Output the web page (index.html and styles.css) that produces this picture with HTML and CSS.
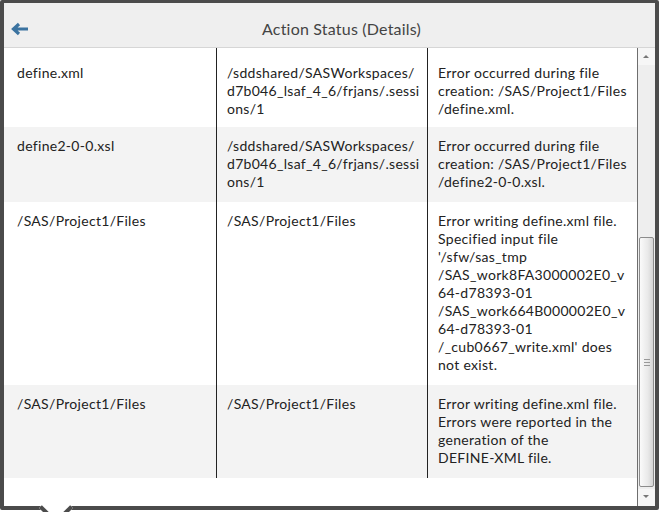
FILE: index.html
```html
<!DOCTYPE html>
<html>
<head>
<meta charset="utf-8">
<link rel="stylesheet" href="styles.css">
</head>
<body>
<div class="dialog">
  <div class="header">
    <svg class="back" width="20" height="14" viewBox="0 0 20 14">
      <path d="M18 7 H4 M9 2 L3.5 7 L9 12" fill="none" stroke="#3b73a0" stroke-width="3.2" stroke-linecap="butt" stroke-linejoin="miter"/>
    </svg>
    <div class="title">Action Status (Details)</div>
  </div>
  <div class="content">
    <div class="table-area">
      <div class="table">
        <div class="row first">
          <div class="cell c1">define.xml</div>
          <div class="cell c2">/sddshared/SASWorkspaces/<br>d7b046_lsaf_4_6/frjans/.sessi<br>ons/1</div>
          <div class="cell c3">Error occurred during file<br>creation: /SAS/Project1/Files<br>/define.xml.</div>
        </div>
        <div class="row alt">
          <div class="cell c1">define2-0-0.xsl</div>
          <div class="cell c2">/sddshared/SASWorkspaces/<br>d7b046_lsaf_4_6/frjans/.sessi<br>ons/1</div>
          <div class="cell c3">Error occurred during file<br>creation: /SAS/Project1/Files<br>/define2-0-0.xsl.</div>
        </div>
        <div class="row">
          <div class="cell c1">/SAS/Project1/Files</div>
          <div class="cell c2">/SAS/Project1/Files</div>
          <div class="cell c3">Error writing define.xml file.<br>Specified input file<br>'/sfw/sas_tmp<br>/SAS_work8FA3000002E0_v<br>64-d78393-01<br>/SAS_work664B000002E0_v<br>64-d78393-01<br>/_cub0667_write.xml' does<br>not exist.</div>
        </div>
        <div class="row alt">
          <div class="cell c1">/SAS/Project1/Files</div>
          <div class="cell c2">/SAS/Project1/Files</div>
          <div class="cell c3">Error writing define.xml file.<br>Errors were reported in the<br>generation of the<br>DEFINE-XML file.</div>
        </div>
      </div>
    </div>
    <div class="scrollbar">
      <div class="arrow up"></div>
      <div class="track">
        <div class="thumb"><div class="grip"></div></div>
      </div>
      <div class="arrow down"></div>
    </div>
  </div>
</div>
</body>
</html>
```

FILE: styles.css
```css
* { box-sizing: border-box; }
html, body { margin: 0; padding: 0; background: #ffffff; }
body { width: 659px; height: 512px; overflow: hidden; font-family: Lato, "Open Sans", sans-serif; color: #222; }

.dialog {
  position: relative;
  width: 659px;
  height: 510px;
  border-style: solid;
  border-color: #4b4b4b;
  border-width: 3px 4px 4px 4px;
  border-radius: 2px;
  display: flex;
  flex-direction: column;
  background: #fff;
}
.dialog::after {
  content: "";
  position: absolute;
  left: 40px;
  bottom: -14px;
  width: 20px;
  height: 20px;
  background: #fff;
  border-right: 4px solid #4b4b4b;
  border-bottom: 4px solid #4b4b4b;
  transform: rotate(45deg);
}

.header {
  height: 45px;
  flex: none;
  background: #efefef;
  border-bottom: 1px solid #d6d6d6;
  display: flex;
  align-items: center;
  padding: 7px 0 0 6px;
}
.back { flex: none; display: block; }
.title {
  flex: 1;
  text-align: center;
  font-size: 16px;
  letter-spacing: 0.2px;
  color: #444;
  padding-right: 2px;
}

.content {
  flex: 1;
  display: flex;
  min-height: 0;
}
.table-area {
  flex: 1;
  background: #fff;
}
.table { display: flex; flex-direction: column; }
.row {
  display: grid;
  grid-template-columns: 213px 211px 1fr;
  background: #fff;
}
.row.alt { background: #f3f3f3; }
.cell {
  font-size: 14px;
  letter-spacing: 0.3px;
  line-height: 18px;
  white-space: nowrap;
  padding: 10px 0 11px 10px;
  color: #222;
}
.row.first .cell { padding-top: 16px; padding-bottom: 9px; }
.c1 { padding-left: 13px; border-right: 1px solid #222; }
.c2 { border-right: 1px solid #222; }

.scrollbar {
  width: 18px;
  flex: none;
  border-left: 1px solid #6e6e6e;
  background: #f6f6f6;
  display: flex;
  flex-direction: column;
}
.arrow {
  height: 17px;
  flex: none;
  position: relative;
}
.arrow::before {
  content: "";
  position: absolute;
  left: 5px;
  width: 0;
  height: 0;
  border-left: 3px solid transparent;
  border-right: 3px solid transparent;
}
.arrow.up::before { top: 7px; border-bottom: 3px solid #777; }
.arrow.down::before { top: 6px; border-top: 3px solid #777; }
.track {
  flex: 1;
  display: flex;
  flex-direction: column;
  justify-content: flex-end;
  background: #eeeeee;
  padding: 0 1px;
}
.thumb {
  height: 250px;
  border: 1px solid #8c8c8c;
  border-radius: 2px;
  background: linear-gradient(to right, #fafafa, #e9e9e9 60%, #d4d4d4);
  display: flex;
  align-items: center;
  justify-content: center;
  margin-bottom: 2px;
}
.grip {
  width: 6px;
  height: 7px;
  border-top: 1px solid #999;
  border-bottom: 1px solid #999;
  position: relative;
}
.grip::after {
  content: "";
  position: absolute;
  left: 0;
  right: 0;
  top: 2px;
  border-top: 1px solid #999;
}
```
